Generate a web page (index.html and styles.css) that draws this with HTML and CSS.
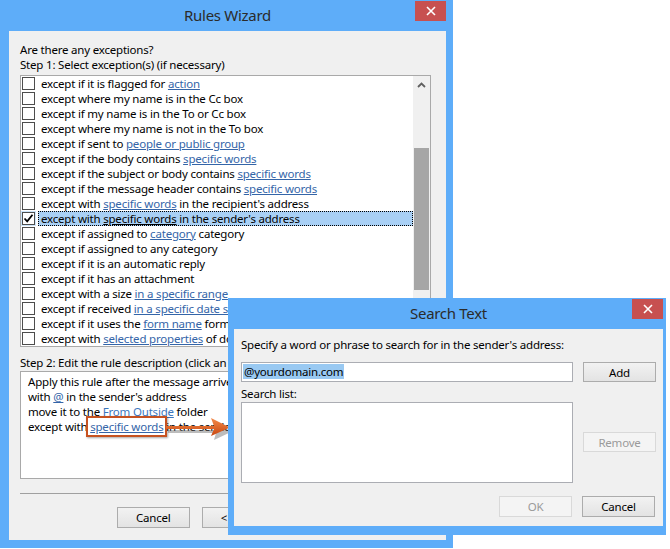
FILE: index.html
```html
<!DOCTYPE html>
<html lang="en">
  <head>
    <meta charset="UTF-8" />
    <title>Rules Wizard - Search Text</title>
    <link rel="stylesheet" href="styles.css">
  </head>
  <body>
    <!-- main wizard window -->
    <div class="window wizard">
      <div class="titlebar">
        <span class="title">Rules Wizard</span>
        <span class="close">
          <svg width="10" height="10" viewBox="0 0 10 10"><path d="M1 1 L9 9 M9 1 L1 9" stroke="#fff" stroke-width="1.6"/></svg>
        </span>
      </div>
      <div class="client">
        <p class="label">Are there any exceptions?</p>
        <p class="label">Step 1: Select exception(s) (if necessary)</p>
        <div class="listbox">
          <ul class="rows">
            <li class="row"><span class="check"></span><span class="text">except if it is flagged for <a>action</a></span></li>
            <li class="row"><span class="check"></span><span class="text">except where my name is in the Cc box</span></li>
            <li class="row"><span class="check"></span><span class="text">except if my name is in the To or Cc box</span></li>
            <li class="row"><span class="check"></span><span class="text">except where my name is not in the To box</span></li>
            <li class="row"><span class="check"></span><span class="text">except if sent to <a>people or public group</a></span></li>
            <li class="row"><span class="check"></span><span class="text">except if the body contains <a>specific words</a></span></li>
            <li class="row"><span class="check"></span><span class="text">except if the subject or body contains <a>specific words</a></span></li>
            <li class="row"><span class="check"></span><span class="text">except if the message header contains <a>specific words</a></span></li>
            <li class="row"><span class="check"></span><span class="text">except with <a>specific words</a> in the recipient's address</span></li>
            <li class="row selected">
              <span class="check">
                <svg width="11" height="11" viewBox="0 0 11 11"><path d="M1.5 5.5 L4.2 8.3 L9.5 1.8" fill="none" stroke="#000" stroke-width="1.8"/></svg>
              </span>
              <span class="text">except with <a>specific words</a> in the sender's address</span>
            </li>
            <li class="row"><span class="check"></span><span class="text">except if assigned to <a>category</a> category</span></li>
            <li class="row"><span class="check"></span><span class="text">except if assigned to any category</span></li>
            <li class="row"><span class="check"></span><span class="text">except if it is an automatic reply</span></li>
            <li class="row"><span class="check"></span><span class="text">except if it has an attachment</span></li>
            <li class="row"><span class="check"></span><span class="text">except with a size <a>in a specific range</a></span></li>
            <li class="row"><span class="check"></span><span class="text">except if received <a>in a specific date span</a></span></li>
            <li class="row"><span class="check"></span><span class="text">except if it uses the <a>form name</a> form</span></li>
            <li class="row"><span class="check"></span><span class="text">except with <a>selected properties</a> of documents or forms</span></li>
          </ul>
          <div class="scrollbar">
            <span class="scroll-up">
              <svg width="9" height="6" viewBox="0 0 9 6"><path d="M1 5 L4.5 1.5 L8 5" fill="none" stroke="#606060" stroke-width="1.8"/></svg>
            </span>
            <div class="thumb"></div>
          </div>
        </div>

        <p class="label step2">Step 2: Edit the rule description (click an underlined value)</p>
        <div class="description">
          <p>Apply this rule after the message arrives</p>
          <p>with <a>@</a> in the sender's address</p>
          <p>move it to the <a class="plain">From Outside</a> folder</p>
          <p>except with <a class="marked">specific words</a> in the sender's address</p>
        </div>

        <div class="separator"></div>

        <div class="buttons">
          <button>Cancel</button>
          <button class="gap">&lt; Back</button>
          <button>Next &gt;</button>
          <button class="gap">Finish</button>
        </div>
      </div>
    </div>

    <!-- callout arrow pointing to the dialog -->
    <svg class="callout" width="70" height="28" viewBox="0 0 70 28">
      <defs>
        <linearGradient id="arrowFill" x1="0" y1="0" x2="0" y2="1">
          <stop offset="0" stop-color="#f28a4a"/>
          <stop offset="1" stop-color="#c9470f"/>
        </linearGradient>
      </defs>
      <path d="M2 13 L50 13 L48 6 L66 14.5 L48 23 L50 16 L2 16 Z" fill="#6b6b6b" opacity="0.45" transform="translate(2 3)"/>
      <path d="M2 12 L50 12 L47 4 L66 13.5 L47 22 L50 15 L2 15 Z" fill="url(#arrowFill)"/>
    </svg>

    <!-- search text dialog -->
    <div class="window dialog">
      <div class="titlebar">
        <span class="title">Search Text</span>
        <span class="close">
          <svg width="10" height="10" viewBox="0 0 10 10"><path d="M1 1 L9 9 M9 1 L1 9" stroke="#fff" stroke-width="1.6"/></svg>
        </span>
      </div>
      <div class="client">
        <p class="label">Specify a word or phrase to search for in the sender's address:</p>
        <div class="field-row">
          <div class="input"><span class="selection">@yourdomain.com</span></div>
          <button>Add</button>
        </div>
        <p class="label list-label">Search list:</p>
        <div class="field-row centered">
          <div class="search-list"></div>
          <button disabled>Remove</button>
        </div>
        <div class="field-row end">
          <button disabled>OK</button>
          <button>Cancel</button>
        </div>
      </div>
    </div>
  </body>
</html>
```

FILE: styles.css
```css
body {
  margin: 0;
  background-color: #ffffff;
  font-family: "Noto Sans", "Open Sans", sans-serif;
  font-size: 11.5px;
  letter-spacing: -0.2px;
  color: #000;
}

p {
  margin: 0;
}

a {
  color: #3465a8;
  text-decoration: underline;
}

/* windows */
.window {
  position: absolute;
  background-color: #5eadf9;
  box-sizing: border-box;
  display: flex;
  flex-direction: column;
}

.wizard {
  left: 0;
  top: 0;
  width: 453px;
  height: 548px;
  padding: 0 7px 8px 9px;
}

.dialog {
  left: 228px;
  top: 298px;
  width: 438px;
  height: 237px;
  padding: 0 3px 9px 6px;
}

.titlebar {
  height: 31px;
  display: flex;
  justify-content: center;
  align-items: center;
  position: relative;
}

.title {
  font-size: 15px;
  letter-spacing: -0.3px;
  color: #2b2b2b;
  margin-top: -1px;
}

.close {
  position: absolute;
  top: 1px;
  right: 0;
  width: 31px;
  height: 20px;
  background-color: #c75050;
  display: flex;
  justify-content: center;
  align-items: center;
}

.client {
  flex: 1;
  background-color: #f0f0f0;
  padding: 11px 15px 0 11px;
}

.label {
  line-height: 15px;
}

/* rule list */
.listbox {
  margin-top: 3px;
  height: 272px;
  box-sizing: border-box;
  border: 1px solid #a9a9a9;
  background-color: #fff;
  display: flex;
  overflow: hidden;
}

.rows {
  list-style: none;
  margin: 0;
  padding: 0;
  flex: 1;
}

.row {
  height: 15px;
  display: flex;
  align-items: center;
  white-space: nowrap;
}

.check {
  width: 11px;
  height: 11px;
  margin-left: 1px;
  border: 1px solid #4d4d4d;
  background-color: #fff;
  display: flex;
  justify-content: center;
  align-items: center;
}

.text {
  margin-left: 3px;
  padding-left: 2px;
  line-height: 13px;
  flex: 1;
  border: 1px dotted transparent;
}

.selected .check {
  outline: 1px solid #cde6fb;
}

.selected .text {
  background-color: #a9d0f5;
  border-color: #000;
}

.selected a {
  color: #000;
}

.scrollbar {
  width: 17px;
  background-color: #f0f0f0;
  display: flex;
  flex-direction: column;
  align-items: center;
}

.scroll-up {
  height: 17px;
  display: flex;
  align-items: center;
}

.thumb {
  width: 15px;
  height: 142px;
  margin-top: 55px;
  background-color: #a6a6a6;
}

/* step 2 */
.step2 {
  margin-top: 8px;
  white-space: nowrap;
}

.description {
  margin-top: 1px;
  height: 108px;
  box-sizing: border-box;
  border: 1px solid #a9a9a9;
  background-color: #fff;
  padding: 2px 7px;
  line-height: 15px;
}

.description a.plain {
  color: #3a76bd;
}

.marked {
  position: relative;
}

.marked::before {
  content: "";
  position: absolute;
  left: -4px;
  right: -4px;
  top: -3px;
  bottom: -3px;
  border: 2px solid #c65220;
  box-shadow: 1px 1px 2px rgba(0, 0, 0, 0.35), inset 0 0 0 1px #fff;
}

.separator {
  margin-top: 14px;
  border-top: 1px solid #a0a0a0;
}

.buttons {
  margin-top: 13px;
  padding-left: 97px;
  display: flex;
}

button {
  width: 73px;
  height: 21px;
  padding: 0;
  font-family: inherit;
  font-size: 11.5px;
  letter-spacing: -0.2px;
  color: #000;
  background: linear-gradient(#f2f2f2, #e3e3e3);
  border: 1px solid #acacac;
}

button:disabled {
  color: #9a9a9a;
  background: #f4f4f4;
  border-color: #d9d9d9;
}

.buttons .gap {
  margin-left: 12px;
}

.callout {
  position: absolute;
  left: 164px;
  top: 414px;
}

/* search text dialog */
.dialog .client {
  padding: 8px 6px 0 7px;
}

.field-row {
  display: flex;
  gap: 10px;
}

.dialog .label:first-child + .field-row {
  margin-top: 10px;
}

.input {
  width: 332px;
  height: 20px;
  box-sizing: border-box;
  border: 1px solid #abadb3;
  background-color: #fff;
  padding: 1px 0 0 1px;
  line-height: 16px;
}

.selection {
  background-color: #99c9f2;
  padding: 0 1px;
}

.dialog .field-row button {
  height: 20px;
}

.list-label {
  margin-top: 4px;
}

.search-list {
  margin-top: 1px;
  width: 332px;
  height: 81px;
  box-sizing: border-box;
  border: 1px solid #abadb3;
  background-color: #fff;
}

.centered {
  align-items: center;
}

.end {
  margin-top: 13px;
  padding-left: 258px;
}

.dialog .end button {
  height: 21px;
}
```
